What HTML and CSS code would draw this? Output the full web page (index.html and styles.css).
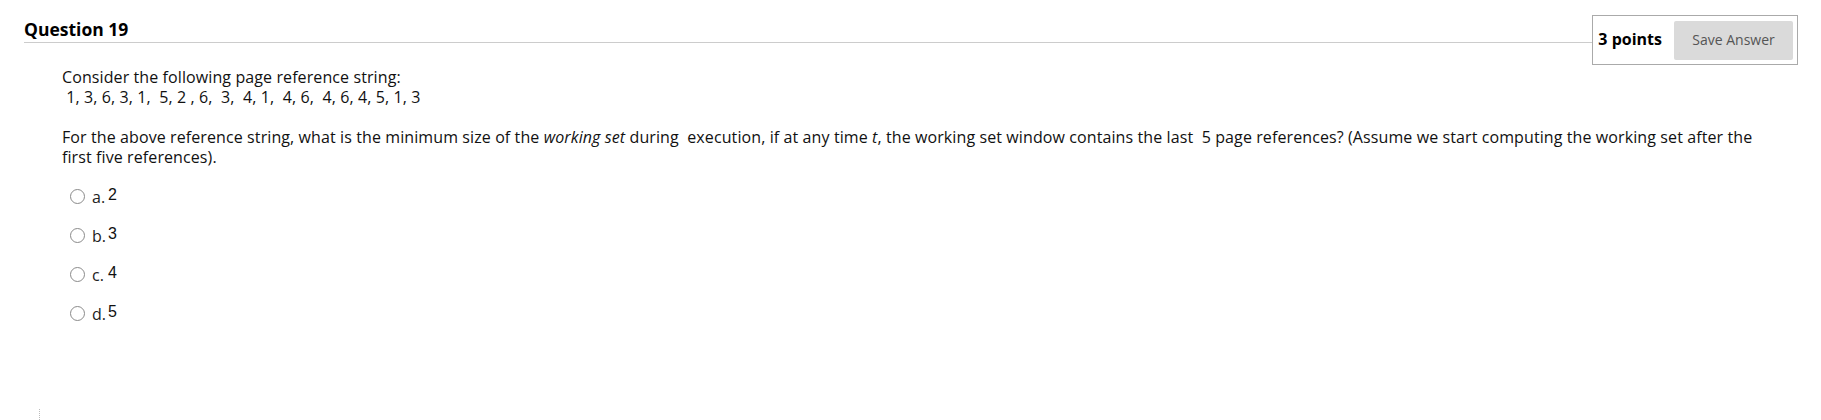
FILE: index.html
```html
<!DOCTYPE html>
<html lang="en">
<head>
<meta charset="utf-8">
<title>Question 19</title>
<link rel="stylesheet" href="styles.css">
</head>
<body>
<div class="page">
  <div class="header">
    <h3 class="title">Question 19</h3>
    <div class="points-box">
      <span class="points">3 points</span>
      <button class="save" type="button">Save Answer</button>
    </div>
  </div>
  <div class="content">
    <p class="intro">Consider the following page reference string:<br><span class="refs"> 1, 3, 6, 3, 1,  5, 2 , 6,  3,  4, 1,  4, 6,  4, 6, 4, 5, 1, 3</span></p>
    <p class="question">For the above reference string, what is the minimum size of the <em>working set</em> during  execution, if at any time <em>t</em>, the working set window contains the last  5 page references? (Assume we start computing the working set after the first five references).</p>
    <ul class="options">
      <li class="option"><span class="radio"></span><span class="letter">a.</span><span class="value">2</span></li>
      <li class="option"><span class="radio"></span><span class="letter">b.</span><span class="value">3</span></li>
      <li class="option"><span class="radio"></span><span class="letter">c.</span><span class="value">4</span></li>
      <li class="option"><span class="radio"></span><span class="letter">d.</span><span class="value">5</span></li>
    </ul>
  </div>
  <div class="mark"></div>
</div>
</body>
</html>
```
FILE: styles.css
```css
html, body {
  margin: 0;
  padding: 0;
  background: #ffffff;
}
body {
  font-family: "Open Sans", "DejaVu Sans", sans-serif;
  color: #111111;
  font-size: 16px;
}
.page {
  padding: 0 23px 0 24px;
}
.header {
  display: flex;
  align-items: flex-start;
}
.title {
  flex: 1;
  margin: 18px 0 0 0;
  padding-bottom: 2px;
  font-size: 17.5px;
  font-weight: 700;
  line-height: 22px;
  color: #000000;
  border-bottom: 1px solid #cccccc;
}
.points-box {
  margin-top: 15px;
  border: 1px solid #aaaaaa;
  padding: 5px 4px 4px 5px;
  display: flex;
  align-items: flex-start;
  gap: 12px;
  background: #ffffff;
}
.points {
  margin-top: 7px;
  font-size: 16px;
  font-weight: 700;
  line-height: 22px;
  color: #000000;
}
.save {
  width: 119px;
  height: 39px;
  padding: 0 0 2px 0;
  border: none;
  border-radius: 2px;
  background: #dadada;
  color: #555555;
  font-family: "Open Sans", "DejaVu Sans", sans-serif;
  font-size: 14px;
  line-height: 20px;
}
.content {
  margin: 2px 30px 0 38px;
}
.intro, .question {
  margin: 0;
  line-height: 20px;
  white-space: pre-wrap;
  letter-spacing: 0.1px;
}
.question {
  margin-top: 20px;
}
.options {
  list-style: none;
  margin: 10px 0 0 0;
  padding: 0;
}
.option {
  height: 39px;
  display: flex;
  align-items: center;
  line-height: 20px;
}
.radio {
  width: 13px;
  height: 13px;
  margin: 0 7px 0 8px;
  border: 1px solid #8a8a8a;
  border-radius: 50%;
  flex: none;
}
.letter {
  width: 16px;
  color: #222222;
}
.value {
  font-family: "Liberation Sans", Arial, sans-serif;
  font-size: 16px;
  color: #111111;
  position: relative;
  top: -2px;
}
.mark {
  margin: 76px 0 0 15px;
  width: 0;
  height: 11px;
  border-left: 1px dotted #bbbbbb;
}
```
